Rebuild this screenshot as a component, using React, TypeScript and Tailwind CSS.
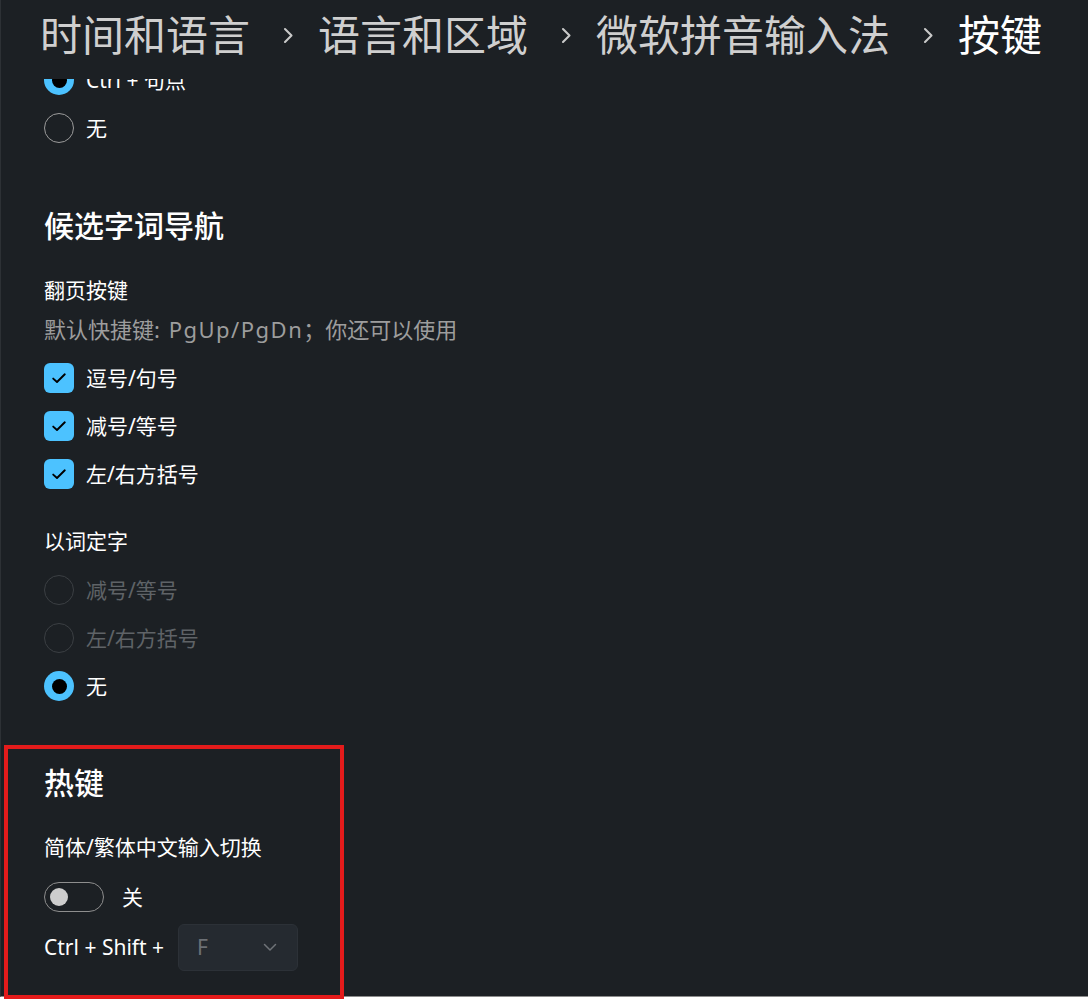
import React from "react";

const FONT = { fontFamily: '"Noto Sans", "Noto Sans CJK SC", sans-serif' };

function Chevron() {
  return (
    <svg width="11" height="17" viewBox="0 0 11 17" className="ml-[33px] mr-[24px] shrink-0">
      <path d="M2 2 L8.5 8.5 L2 15" fill="none" stroke="#c9c9c9" strokeWidth="2.1" strokeLinecap="round" strokeLinejoin="round" />
    </svg>
  );
}

function Radio({ label, state }: { label: string; state: "checked" | "off" | "disabled" }) {
  return (
    <div className="h-[48px] flex items-center">
      {state === "checked" ? (
        <div className="w-[30px] h-[30px] rounded-full bg-[#4cc2ff] flex items-center justify-center shrink-0">
          <div className="w-[15px] h-[15px] rounded-full bg-black" />
        </div>
      ) : state === "off" ? (
        <div className="w-[30px] h-[30px] rounded-full border-[1.5px] border-[#9b9b9b] shrink-0" />
      ) : (
        <div className="w-[30px] h-[30px] rounded-full border-[1.5px] border-[#3b3f43] shrink-0" />
      )}
      <span className={`ml-[12px] text-[21px] leading-none ${state === "disabled" ? "text-[#5f6367]" : "text-white"}`}>{label}</span>
    </div>
  );
}

function Check({ label }: { label: string }) {
  return (
    <div className="h-[48px] flex items-center">
      <div className="w-[30px] h-[30px] rounded-[6px] bg-[#4cc2ff] flex items-center justify-center shrink-0">
        <svg width="20" height="20" viewBox="0 0 20 20">
          <path d="M4.2 10.6 L8 14 L15.8 6.3" fill="none" stroke="#000" strokeWidth="1.9" strokeLinecap="round" strokeLinejoin="round" />
        </svg>
      </div>
      <span className="ml-[12px] text-[21px] leading-none text-white">{label}</span>
    </div>
  );
}

export default function App() {
  return (
    <div className="w-[1088px] h-[1002px] bg-white overflow-hidden relative" style={FONT}>
      <div className="h-[997px] bg-[#1c2024] border-l border-[#2d3135] border-b border-b-[#8c8c8c] overflow-hidden">
        <div className="h-[79px] pt-[14px] pl-[39px]">
          <div className="h-[42px] flex items-center text-[42px] leading-none">
            <span className="text-[#cfcfcf]">时间和语言</span>
            <Chevron />
            <span className="text-[#cfcfcf]">语言和区域</span>
            <Chevron />
            <span className="text-[#cfcfcf]">微软拼音输入法</span>
            <Chevron />
            <span className="text-white">按键</span>
          </div>
        </div>
        <div className="pl-[43px]">
          <div className="h-[25px] overflow-hidden">
            <div className="mt-[-23px]">
              <Radio label="Ctrl + 句点" state="checked" />
            </div>
          </div>
          <Radio label="无" state="off" />

          <div className="mt-[54px] h-[40px] flex items-center text-[30px] font-medium text-white leading-none">候选字词导航</div>
          <div className="mt-[29px] h-[30px] flex items-center text-[21px] text-white leading-none">翻页按键</div>
          <div className="mt-[9px] h-[30px] flex items-center text-[22px] text-[#9d9d9d] leading-none whitespace-nowrap">
            默认快捷键<span className="tracking-[1.5px]">: PgUp/PgDn</span>；你还可以使用
          </div>
          <div className="mt-[10px]">
            <Check label="逗号/句号" />
            <Check label="减号/等号" />
            <Check label="左/右方括号" />
          </div>

          <div className="mt-[28px] h-[30px] flex items-center text-[21px] text-white leading-none">以词定字</div>
          <div className="mt-[10px]">
            <Radio label="减号/等号" state="disabled" />
            <Radio label="左/右方括号" state="disabled" />
            <Radio label="无" state="checked" />
          </div>

          <div className="mt-[53px] h-[40px] flex items-center text-[30px] font-medium text-white leading-none">热键</div>
          <div className="mt-[29px] h-[30px] flex items-center text-[21px] text-white leading-none">简体/繁体中文输入切换</div>
          <div className="mt-[11px] h-[48px] flex items-center">
            <div className="w-[60px] h-[30px] rounded-full border-[1.5px] border-[#8e8e8e] flex items-center pl-[5px] shrink-0">
              <div className="w-[18px] h-[18px] rounded-full bg-[#cdcdcd]" />
            </div>
            <span className="ml-[18px] text-[21px] text-white leading-none">关</span>
          </div>
          <div className="mt-[2px] h-[48px] flex items-center">
            <span className="text-[21px] text-white leading-none">Ctrl + Shift +</span>
            <div className="ml-[14px] w-[120px] h-[47px] rounded-[6px] bg-[#252a30] border border-[#2c3137] flex items-center justify-between pl-[18px] pr-[20px]">
              <span className="text-[21px] text-[#6c7075] leading-none">F</span>
              <svg width="14" height="9" viewBox="0 0 14 9">
                <path d="M1.5 1.5 L7 7 L12.5 1.5" fill="none" stroke="#6f7378" strokeWidth="1.5" strokeLinecap="round" strokeLinejoin="round" />
              </svg>
            </div>
          </div>
        </div>
      </div>
      <div className="absolute left-[4px] top-[745px] w-[340px] h-[254px] border-[4px] border-[#e41b1b] pointer-events-none" />
    </div>
  );
}
